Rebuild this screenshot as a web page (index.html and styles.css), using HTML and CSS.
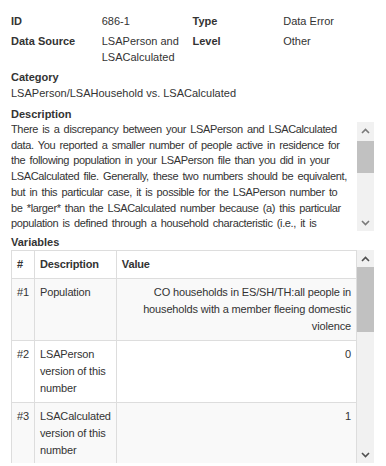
FILE: index.html
```html
<!DOCTYPE html>
<html>
<head>
<meta charset="utf-8">
<link rel="stylesheet" href="styles.css">
</head>
<body>
<div class="page">
  <div class="meta">
    <div class="lbl">ID</div><div class="val">686-1</div>
    <div class="lbl">Type</div><div class="val">Data Error</div>
    <div class="lbl">Data Source</div><div class="val">LSAPerson and LSACalculated</div>
    <div class="lbl">Level</div><div class="val">Other</div>
  </div>
  <div class="section">
    <div class="lbl">Category</div>
    <div class="val">LSAPerson/LSAHousehold vs. LSACalculated</div>
  </div>
  <div class="section">
    <div class="lbl">Description</div>
    <div class="scrollbox desc">
      <div class="scroll-content desc-text">There is a discrepancy between your LSAPerson and LSACalculated data. You reported a smaller number of people active in residence for the following population in your LSAPerson file than you did in your LSACalculated file. Generally, these two numbers should be equivalent, but in this particular case, it is possible for the LSAPerson number to be *larger* than the LSACalculated number because (a) this particular population is defined through a household characteristic (i.e., it is household-based rather than person-based), and (b) people may be served in more than one household type during the report period. Because of this, a person may be counted in this population in LSAPerson but may not be counted in the corresponding LSACalculated row if they were not active in residence in a qualifying household on the relevant dates. However, the LSAPerson number should never be smaller than the LSACalculated number. Please review your data and the logic used to produce these files to determine why fewer people were reported in LSAPerson than in LSACalculated for this population.</div>
      <div class="vscroll">
        <div class="sbtn"><svg width="9" height="6" viewBox="0 0 9 6"><polyline points="1,5 4.5,1.5 8,5" fill="none" stroke="#7a7a7a" stroke-width="1.6"/></svg></div>
        <div class="thumb thumb-desc"></div>
        <div class="track"></div>
        <div class="sbtn"><svg width="9" height="6" viewBox="0 0 9 6"><polyline points="1,1 4.5,4.5 8,1" fill="none" stroke="#7a7a7a" stroke-width="1.6"/></svg></div>
      </div>
    </div>
  </div>
  <div class="section vsec">
    <div class="lbl">Variables</div>
    <div class="scrollbox vars">
      <div class="scroll-content">
        <table class="vtable">
          <thead>
            <tr><th class="c-num">#</th><th class="c-desc">Description</th><th class="c-val">Value</th></tr>
          </thead>
          <tbody>
            <tr><td>#1</td><td>Population</td><td class="num">CO households in ES/SH/TH:all people in households with a member fleeing domestic violence</td></tr>
            <tr><td>#2</td><td>LSAPerson version of this number</td><td class="num">0</td></tr>
            <tr><td>#3</td><td>LSACalculated version of this number</td><td class="num">1</td></tr>
            <tr><td>#4</td><td>Difference between the numbers</td><td class="num">1</td></tr>
            <tr><td>#5</td><td>Project type of the population</td><td class="num">ES/SH/TH</td></tr>
          </tbody>
        </table>
      </div>
      <div class="vscroll">
        <div class="sbtn"><svg width="9" height="6" viewBox="0 0 9 6"><polyline points="1,5 4.5,1.5 8,5" fill="none" stroke="#505050" stroke-width="1.6"/></svg></div>
        <div class="thumb thumb-vars"></div>
        <div class="track"></div>
        <div class="sbtn"><svg width="9" height="6" viewBox="0 0 9 6"><polyline points="1,1 4.5,4.5 8,1" fill="none" stroke="#505050" stroke-width="1.6"/></svg></div>
      </div>
    </div>
  </div>
</div>
</body>
</html>
```

FILE: styles.css
```css
html, body {
  margin: 0;
  padding: 0;
  background: #fff;
}
body {
  font-family: "Liberation Sans", Arial, sans-serif;
  font-size: 11px;
  line-height: 16px;
  color: #333;
}
.page {
  padding: 13px 12px 0 11px;
}
.meta {
  display: grid;
  grid-template-columns: repeat(4, 1fr);
  row-gap: 4px;
}
.lbl {
  font-weight: bold;
}
.section {
  margin-top: 4px;
}
.section + .section {
  margin-top: 5px;
}
.section.vsec {
  margin-top: 3px;
}
.scrollbox {
  display: flex;
}
.scroll-content {
  flex: 1;
  min-width: 0;
  overflow: hidden;
}
.desc-text {
  letter-spacing: -0.35px;
  word-spacing: 1.5px;
  padding-right: 4px;
}
.vscroll {
  width: 17px;
  flex: none;
  background: #f1f1f1;
  display: flex;
  flex-direction: column;
}
.sbtn {
  height: 17px;
  flex: none;
  display: flex;
  align-items: center;
  justify-content: center;
}
.sbtn svg {
  display: block;
}
.thumb {
  flex: none;
  background: #c1c1c1;
}
.track {
  flex: 1;
}
.thumb-desc {
  margin-top: 2px;
  height: 32px;
}
.thumb-vars {
  height: 65px;
}
.desc {
  height: 109px;
  line-height: 15.7px;
}
.vars {
  height: 213px;
}
.vtable {
  width: 100%;
  border-collapse: collapse;
  line-height: 17px;
  letter-spacing: -0.15px;
}
.vtable th, .vtable td {
  border: 1px solid #ddd;
  padding: 5px;
  text-align: left;
  vertical-align: top;
}
.vtable th {
  font-weight: bold;
}
.vtable tbody tr:nth-child(odd) {
  background: #f9f9f9;
}
.vtable td.num {
  text-align: right;
}
.c-num { width: 12px; }
.c-desc { width: 60px; }
```
